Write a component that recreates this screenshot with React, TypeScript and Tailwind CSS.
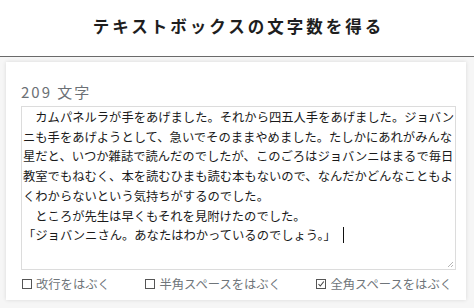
const text = [
  "　カムパネルラが手をあげました。それから四五人手をあげました。ジョバンニも手をあげようとして、急いでそのままやめました。たしかにあれがみんな星だと、いつか雑誌で読んだのでしたが、このごろはジョバンニはまるで毎日教室でもねむく、本を読むひまも読む本もないので、なんだかどんなこともよくわからないという気持ちがするのでした。",
  "　ところが先生は早くもそれを見附けたのでした。",
  "「ジョバンニさん。あなたはわかっているのでしょう。」",
];

const options = [
  { label: "改行をはぶく", checked: false },
  { label: "半角スペースをはぶく", checked: false },
  { label: "全角スペースをはぶく", checked: true },
];

const App = () => {
  return (
    <div className="w-[474px] h-[308px] overflow-hidden bg-[#f6f6f6]" style={{ fontFamily: "'Noto Sans CJK JP', 'Noto Sans', sans-serif" }}>
      {/* Header */}
      <header className="h-[57px] bg-white border-b border-[#6a6a6a] flex items-center justify-center">
        <h1 className="text-[16.5px] font-bold tracking-[3px] text-[#1e1e1e] pl-[3px] pb-[4px]">
          テキストボックスの文字数を得る
        </h1>
      </header>

      {/* Card */}
      <div className="mt-[5px] ml-[6px] w-[460px] h-[238px] bg-white shadow-[0_0_4px_rgba(0,0,0,0.12)] pt-[20px] pl-[15px] pr-[10px]">
        <p className="text-[15px] leading-[20px] tracking-[2px] text-[#6b7075]">209 文字</p>

        <div className="relative mt-[4px] h-[164px] border border-[#dcdcdc] pl-[1px] pt-[1px] text-[12.3px] leading-[19.7px] text-[#1a1a1a]">
          {text.map((line, i) => (
            <p key={i} className="whitespace-pre-wrap break-all">
              {line}
              {i === text.length - 1 && (
                <span className="inline-block ml-[7px] w-[1px] h-[16px] align-[-3px] bg-[#111]" />
              )}
            </p>
          ))}
          <svg className="absolute right-[1px] bottom-[1px]" width="7" height="7" viewBox="0 0 7 7">
            <path d="M6 1 L1 6 M6 4 L4 6" stroke="#b5b5b5" strokeWidth="1" />
          </svg>
        </div>

        <div className="mt-[5px] flex justify-between pl-[1px] pr-[4px] text-[12.3px] leading-[18px] text-[#6f757a]">
          {options.map((o) => (
            <label key={o.label} className="flex items-center gap-[4px]">
              <span className="w-[10px] h-[10px] border border-[#555] flex items-center justify-center">
                {o.checked && (
                  <svg width="8" height="8" viewBox="0 0 8 8">
                    <path d="M1.5 4 L3.3 6 L6.8 1.5" fill="none" stroke="#444" strokeWidth="1.1" />
                  </svg>
                )}
              </span>
              <span>{o.label}</span>
            </label>
          ))}
        </div>
      </div>
    </div>
  );
};

export default App;
